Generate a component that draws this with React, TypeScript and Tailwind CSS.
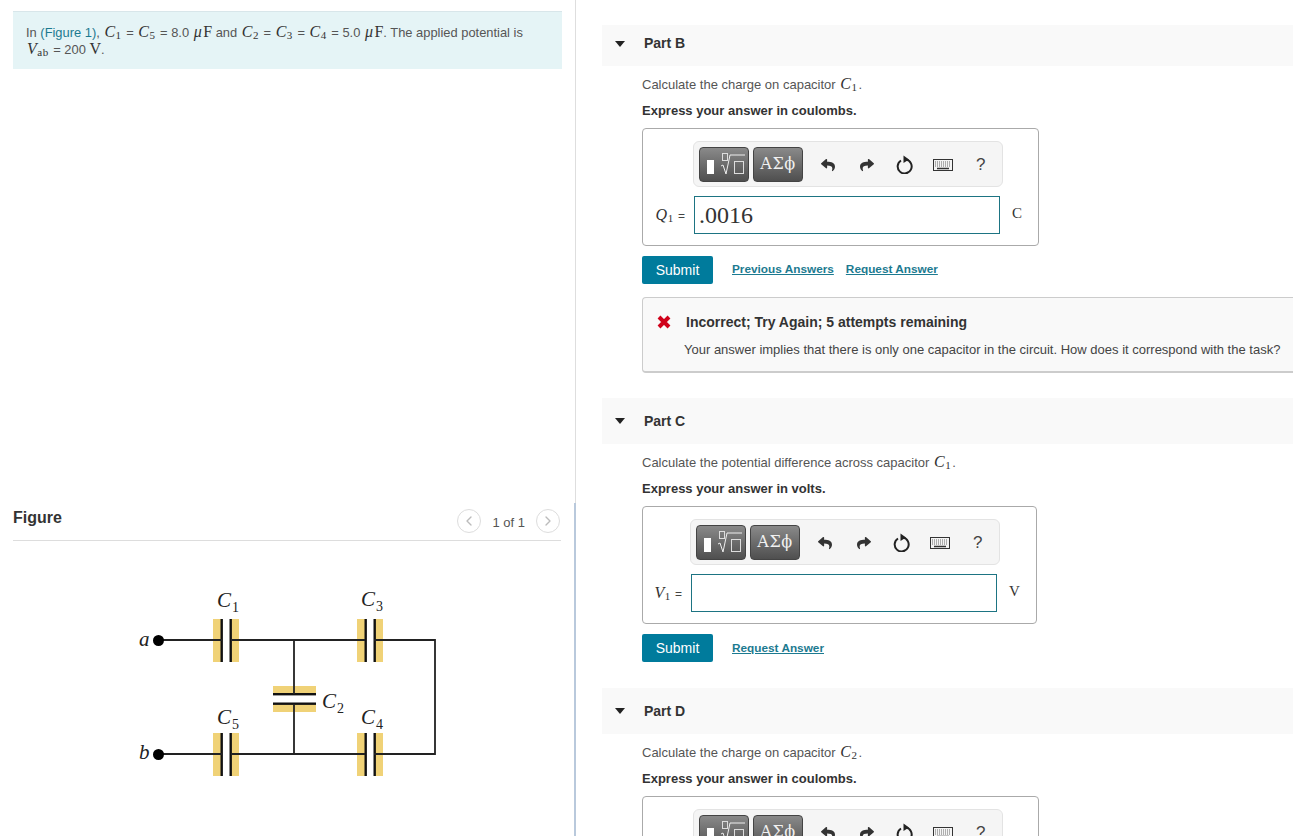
import { ChevronLeft, ChevronRight } from "lucide-react";
import { FaReply, FaShare } from "react-icons/fa";

function Sym({ v, sub }: { v: string; sub: string }) {
  return (
    <span className="mx-[1px] font-['Liberation_Serif',serif] text-[16px] tracking-[0.5px] text-[#333]">
      <i>{v}</i>
      <span className="text-[11px] relative top-[2px]">{sub}</span>
    </span>
  );
}

function Unit({ u }: { u: string }) {
  return (
    <span className="font-['Liberation_Serif',serif] text-[16px] text-[#333]">{u}</span>
  );
}

function Keyboard() {
  return (
    <svg width="20" height="12" viewBox="0 0 20 12">
      <rect x="0.5" y="0.5" width="19" height="11" fill="#f4f4f4" stroke="#333" />
      <path d="M2 3h16M2 5h16M2 7h16" stroke="#666" strokeWidth="1" strokeDasharray="1 1" />
      <path d="M4 9.5h12" stroke="#333" strokeWidth="1.5" />
    </svg>
  );
}

function Reset() {
  return (
    <svg width="18" height="19" viewBox="0 0 18 19" className="block">
      <path d="M5 5.5A7 7 0 1 0 10 4.6" fill="none" stroke="#222" strokeWidth="2" />
      <path d="M7.5 0.5L13 4.5L7.5 8z" fill="#222" />
    </svg>
  );
}

function Toolbar({ cut }: { cut?: boolean }) {
  return (
    <div
      className={`w-[310px] ${cut ? "h-[60px]" : "h-[46px]"} shrink-0 flex items-start bg-[#f5f5f5] border border-[#e3e3e3] rounded-[6px] pl-[5px] pt-[5px]`}
    >
      <div className="w-[50px] h-[35px] mr-[4px] rounded-[4px] border border-[#444] bg-gradient-to-b from-[#8a8a8a] to-[#4f4f4f]">
        <svg width="48" height="33" viewBox="0 0 48 33" className="block">
          <rect x="7" y="12" width="7" height="14" fill="#fff" />
          <rect x="22.5" y="5.5" width="5" height="7" fill="none" stroke="#ddd" />
          <path d="M21 18l2-1 3 9 4-19h15" fill="none" stroke="#eee" />
          <rect x="34.5" y="13.5" width="9" height="12" fill="none" stroke="#ddd" />
        </svg>
      </div>
      <div className="w-[50px] h-[35px] pb-[2px] rounded-[4px] border border-[#444] bg-gradient-to-b from-[#8a8a8a] to-[#4f4f4f] flex items-center justify-center font-['DejaVu_Serif',serif] text-[16px] tracking-[0.5px] text-[#f0f0f0]">
        ΑΣϕ
      </div>
      <div className="h-[35px] flex items-center pl-[18px] text-[#333]">
        <FaReply className="w-[14px] h-[14px]" />
        <FaShare className="w-[14px] h-[14px] ml-[25px]" />
        <span className="ml-[22px]">
          <Reset />
        </span>
        <span className="ml-[19px]">
          <Keyboard />
        </span>
        <span className="ml-[23px] text-[17px] text-[#444]">?</span>
      </div>
    </div>
  );
}

function AnswerBox({
  w,
  sym,
  value,
  unit,
  toolbarLeft,
  labelW,
  cut,
}: {
  w: string;
  sym: React.ReactNode;
  value?: string;
  unit?: string;
  toolbarLeft: string;
  labelW?: string;
  cut?: boolean;
}) {
  return (
    <div
      className={`${w} ${cut ? "h-[60px] overflow-hidden" : "h-[118px]"} border border-[#aaa] rounded-[4px] bg-white pt-[12px]`}
    >
      <div className={toolbarLeft}>
        <Toolbar cut={cut} />
      </div>
      {!cut && (
        <div className="flex items-center mt-[9px] h-[38px]">
          <div className={`${labelW} text-right pr-[9px] text-[12px] text-[#444] whitespace-nowrap`}>
            {sym} =
          </div>
          <div className="w-[306px] h-[38px] border border-[#1d7483] pl-[4px] flex items-center font-['Liberation_Serif',serif] text-[24px] text-[#333]">
            {value}
          </div>
          <div className="ml-[12px] -mt-[4px] font-['Liberation_Serif',serif] text-[15px] text-[#333]">{unit}</div>
        </div>
      )}
    </div>
  );
}

function PartHeader({ label, up }: { label: string; up?: boolean }) {
  return (
    <div className="flex items-center h-full bg-[#f9f9f9] pl-[13px] text-[14px] font-bold text-[#333]">
      <span className={`w-0 h-0 border-x-[5px] border-x-transparent border-t-[6px] border-t-[#222] ${up ? "-mt-[4px]" : ""}`} />
      <span className={`ml-[19px] ${up ? "-mt-[4px]" : ""}`}>{label}</span>
    </div>
  );
}

function SubmitBtn() {
  return (
    <button className="w-[71px] h-[28px] bg-[#007b9c] rounded-[2px] text-white text-[14px] font-['Liberation_Sans',sans-serif]">
      Submit
    </button>
  );
}

function Cap({ x, y, horizontal }: { x: number; y: number; horizontal?: boolean }) {
  if (horizontal) {
    return (
      <g>
        <rect x={x} y={y} width={43} height={8} fill="#f0d277" />
        <rect x={x} y={y + 18} width={43} height={8} fill="#f0d277" />
        <rect x={x} y={y + 7} width={43} height={2.4} fill="#111" />
        <rect x={x} y={y + 16.5} width={43} height={2.4} fill="#111" />
      </g>
    );
  }
  return (
    <g>
      <rect x={x} y={y} width={8} height={43} fill="#f0d277" />
      <rect x={x + 18} y={y} width={8} height={43} fill="#f0d277" />
      <rect x={x + 7.5} y={y} width={2.4} height={43} fill="#111" />
      <rect x={x + 16.5} y={y} width={2.4} height={43} fill="#111" />
    </g>
  );
}

function Label({ x, y, n }: { x: number; y: number; n: string }) {
  return (
    <text x={x} y={y} fontFamily="Liberation Serif, serif" fontSize="21" fill="#222">
      <tspan fontStyle="italic">C</tspan>
      <tspan fontSize="14" dy="5" dx="1">
        {n}
      </tspan>
    </text>
  );
}

function Circuit() {
  return (
    <svg width="330" height="200" viewBox="0 0 330 200" className="block">
      <Cap x={93} y={38} />
      <Cap x={237} y={38} />
      <Cap x={93} y={152} />
      <Cap x={237} y={152} />
      <Cap x={153} y={105} horizontal />
      <g stroke="#222" strokeWidth="1.8" fill="none">
        <path d="M38 59H102M111 59H245M254 59H315V173H254M245 173H111M102 173H38" />
        <path d="M174 59V113M174 123V173" />
      </g>
      <circle cx="38.5" cy="59.5" r="5.5" fill="#000" />
      <circle cx="38.5" cy="173.5" r="5.5" fill="#000" />
      <text x="19" y="65" fontFamily="Liberation Serif, serif" fontStyle="italic" fontSize="21" fill="#222">
        a
      </text>
      <text x="19" y="178" fontFamily="Liberation Serif, serif" fontStyle="italic" fontSize="21" fill="#222">
        b
      </text>
      <Label x={97} y={26} n="1" />
      <Label x={241} y={25} n="3" />
      <Label x={202} y={127} n="2" />
      <Label x={97} y={143} n="5" />
      <Label x={241} y={143} n="4" />
    </svg>
  );
}

export default function App() {
  return (
    <div className="w-[1293px] h-[836px] overflow-hidden flex bg-white font-['Liberation_Sans',sans-serif] text-[12px] text-[#555]">
      {/* left column: problem text and figure */}
      <div className="w-[576px] shrink-0 flex flex-col">
        <div className="h-[503px] border-r border-r-[#dedede] pt-[11px] pl-[13px]">
          <div className="w-[549px] h-[58px] bg-[#e5f4f6] border-t border-t-[#d8e6ea] pl-[13px] pt-[12px] text-[12.9px] leading-[15px]">
            In <span className="text-[#1c7a90]">(Figure 1)</span>, <Sym v="C" sub="1" /> = <Sym v="C" sub="5" /> = 8.0{" "}
            <Sym v="μ" sub="" />
            <Unit u="F" /> and <Sym v="C" sub="2" /> = <Sym v="C" sub="3" /> = <Sym v="C" sub="4" /> = 5.0{" "}
            <Sym v="μ" sub="" />
            <Unit u="F" />. The applied potential is
            <br />
            <Sym v="V" sub="ab" /> = 200 <Unit u="V" />.
          </div>
        </div>
        <div className="flex-1 border-r-2 border-r-[#b9c9dc] pl-[13px]">
          <div className="w-[548px] h-[38px] flex items-center border-b border-b-[#ddd]">
            <span className="text-[16px] font-bold text-[#333] -mt-[7px]">Figure</span>
            <div className="ml-auto pr-[1px] flex items-center gap-[11px] -mt-[1px] text-[13px] text-[#555]">
              <span className="w-[24px] h-[24px] rounded-full border border-[#ddd] flex items-center justify-center text-[#bbb]">
                <ChevronLeft className="w-[16px] h-[16px]" />
              </span>
              <span className="mt-[3px]">1 of 1</span>
              <span className="w-[24px] h-[24px] rounded-full border border-[#ddd] flex items-center justify-center text-[#bbb]">
                <ChevronRight className="w-[16px] h-[16px]" />
              </span>
            </div>
          </div>
          <div className="mt-[40px] ml-[107px]">
            <Circuit />
          </div>
        </div>
      </div>

      {/* right column: parts */}
      <div className="flex-1 pl-[26px] pt-[25px] text-[13px]">
        <div className="h-[41px]">
          <PartHeader label="Part B" up />
        </div>
        <div className="pl-[40px]">
          <p className="mt-[9px] h-[18px] leading-[18px]">
            Calculate the charge on capacitor <Sym v="C" sub="1" />.
          </p>
          <p className="mt-[9px] h-[18px] leading-[18px] font-bold text-[#333] text-[13px]">Express your answer in coulombs.</p>
          <div className="mt-[8px]">
            <AnswerBox w="w-[397px]" toolbarLeft="ml-[50px]" labelW="w-[51px]" sym={<Sym v="Q" sub="1" />} value=".0016" unit="C" />
          </div>
          <div className="mt-[10px] flex items-center">
            <SubmitBtn />
            <a className="ml-[19px] text-[11.8px] font-bold text-[#1c7a90] underline">Previous Answers</a>
            <a className="ml-[12px] text-[11.8px] font-bold text-[#1c7a90] underline">Request Answer</a>
          </div>
          <div className="mt-[13px] -mr-[3px] h-[76px] border border-[#ccc] border-b-2 rounded-[4px] bg-[#f9f9f9] pt-[15px] pl-[14px]">
            <div className="flex items-center h-[18px]">
              <svg width="14" height="14" viewBox="0 0 14 14">
                <path d="M2 2L12 12M12 2L2 12" stroke="#d0021b" strokeWidth="4" />
              </svg>
              <span className="ml-[15px] text-[14px] font-bold text-[#333]">Incorrect; Try Again; 5 attempts remaining</span>
            </div>
            <p className="mt-[10px] ml-[27px] leading-[18px] text-[#444] whitespace-nowrap">
              Your answer implies that there is only one capacitor in the circuit. How does it correspond with the task?
            </p>
          </div>
        </div>

        <div className="h-[46px] mt-[25px]">
          <PartHeader label="Part C" />
        </div>
        <div className="pl-[40px]">
          <p className="mt-[9px] h-[18px] leading-[18px]">
            Calculate the potential difference across capacitor <Sym v="C" sub="1" />.
          </p>
          <p className="mt-[9px] h-[18px] leading-[18px] font-bold text-[#333] text-[13px]">Express your answer in volts.</p>
          <div className="mt-[8px]">
            <AnswerBox w="w-[395px]" toolbarLeft="ml-[47px]" labelW="w-[48px]" sym={<Sym v="V" sub="1" />} unit="V" />
          </div>
          <div className="mt-[10px] flex items-center">
            <SubmitBtn />
            <a className="ml-[19px] mt-[2px] text-[11.8px] font-bold text-[#1c7a90] underline">Request Answer</a>
          </div>
        </div>

        <div className="h-[46px] mt-[26px]">
          <PartHeader label="Part D" />
        </div>
        <div className="pl-[40px]">
          <p className="mt-[9px] h-[18px] leading-[18px]">
            Calculate the charge on capacitor <Sym v="C" sub="2" />.
          </p>
          <p className="mt-[9px] h-[18px] leading-[18px] font-bold text-[#333] text-[13px]">Express your answer in coulombs.</p>
          <div className="mt-[8px]">
            <AnswerBox w="w-[397px]" toolbarLeft="ml-[50px]" sym={null} cut />
          </div>
        </div>
      </div>
    </div>
  );
}
